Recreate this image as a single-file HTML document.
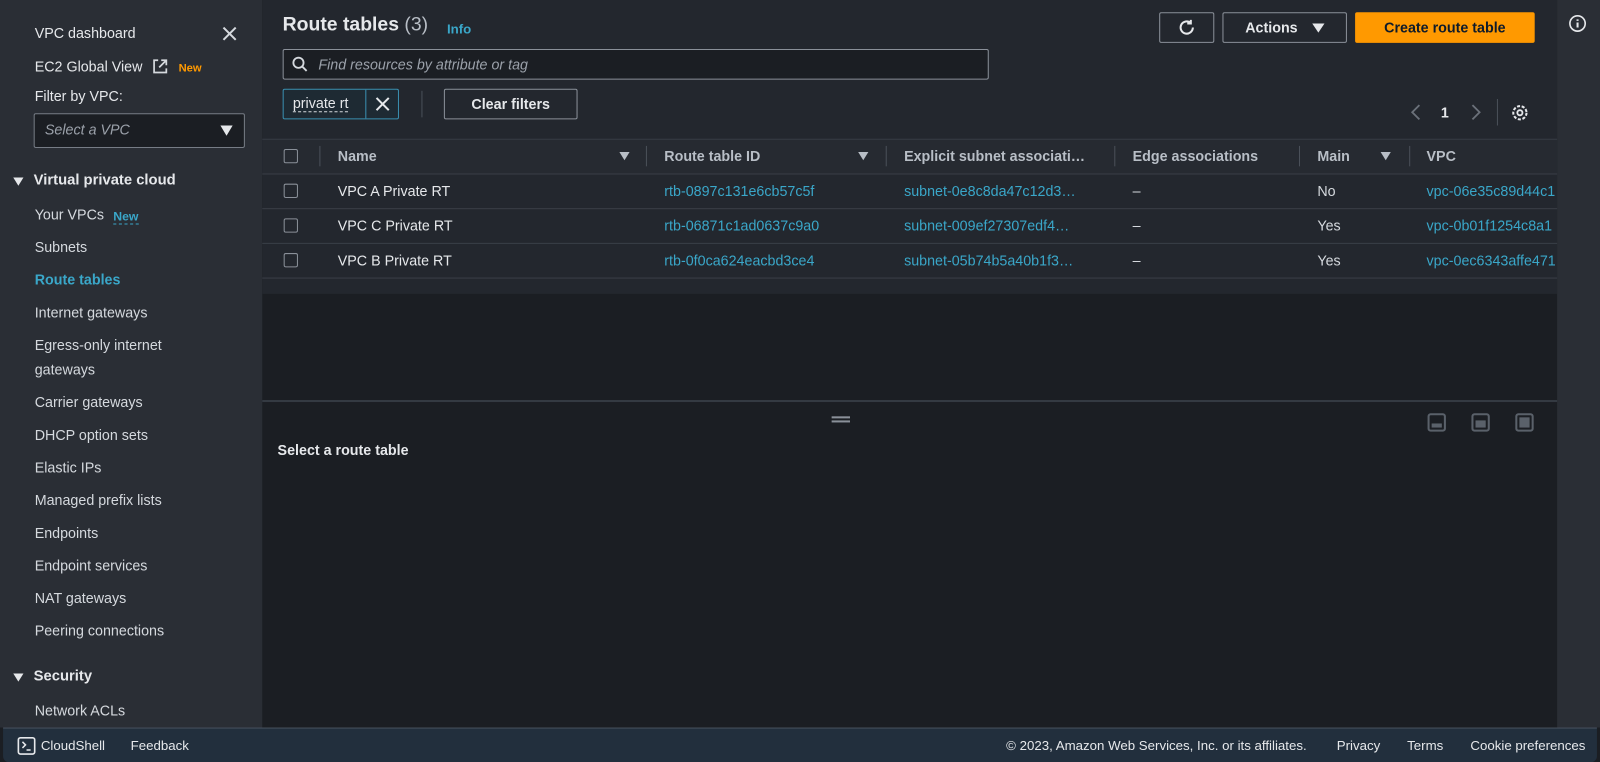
<!DOCTYPE html>
<html><head><meta charset="utf-8"><style>
*{box-sizing:border-box;margin:0;padding:0}
html,body{width:1600px;height:762px;overflow:hidden;background:#1b1e23}
#wrap{position:absolute;left:0;top:0;width:1568px;height:747px;transform:scale(1.020408);transform-origin:0 0;font-family:"Liberation Sans",sans-serif;font-size:14px;color:#d5d9de}
.abs{position:absolute;white-space:nowrap}
#side{position:absolute;left:0;top:0;width:257px;height:713px;background:#2a2e35}
#side .it{position:absolute;left:34px;font-size:14px;color:#d5d9de}
#side .h{position:absolute;left:14px;font-weight:bold;font-size:14.5px;color:#e6e8eb}
#main{position:absolute;left:257px;top:0;width:1269px;height:288px;background:#23272e}
#rail{position:absolute;left:1526px;top:0;width:42px;height:713px;background:#2a2e35}
.link{color:#3aa7c9}
.btn{position:absolute;border:1px solid #8a9099;border-radius:2px;color:#e6e8eb;font-weight:bold;font-size:14px;display:flex;align-items:center;justify-content:center}
.cb{position:absolute;left:278px;width:14px;height:14px;border:1.5px solid #8a9099;border-radius:2px}
.row{position:absolute;left:257px;width:1269px;height:1px;background:#3a3f47}
.sep{position:absolute;width:1px;height:20px;background:#4a5059}
.hd{position:absolute;font-weight:bold;color:#b8bec6;font-size:14px}
.tri{position:absolute;width:0;height:0;border-left:5px solid transparent;border-right:5px solid transparent;border-top:8px solid #b8bec6}
#fbar{position:absolute;left:3px;top:713px;width:1562px;height:34px;background:#222f3d;border-top:1px solid #4a5361;border-radius:0 0 6px 6px}
#fbar span{position:absolute;top:9px;font-size:13px;color:#e6e8eb}
</style></head><body><div id="wrap">
<div id="side">
<div class="it" style="top:24px;color:#e6e8eb">VPC dashboard</div>
<svg class="abs" style="left:218px;top:26px" width="14" height="14"><path d="M1 1L13 13M13 1L1 13" stroke="#d5d9de" stroke-width="2"/></svg>
<div class="it" style="top:57px;color:#e6e8eb">EC2 Global View</div>
<svg class="abs" style="left:149px;top:57px" width="16" height="16"><path d="M6 2H2v12h12v-4M9 2h5v5M14 2L7 9" stroke="#d5d9de" stroke-width="1.7" fill="none"/></svg>
<div class="abs" style="left:175px;top:61px;font-size:11px;font-weight:bold;color:#ff9900">New</div>
<div class="it" style="top:86px;color:#e6e8eb">Filter by VPC:</div>
<div class="abs" style="left:33px;top:111px;width:207px;height:34px;border:1px solid #767c85;background:#1b1e23;border-radius:2px"></div>
<div class="abs" style="left:44px;top:119px;font-style:italic;color:#9ba1aa">Select a VPC</div>
<div class="tri" style="left:216px;top:123px;border-top-color:#e6e8eb;border-left-width:6px;border-right-width:6px;border-top-width:10px"></div>
<div class="tri" style="left:13px;top:174px;border-top-color:#e6e8eb"></div>
<div class="h" style="left:33px;top:169px">Virtual private cloud</div>
<div class="it" style="top:202px">Your VPCs</div>
<div class="abs" style="left:111px;top:205px;font-size:12px;font-weight:bold;color:#3aa7c9;border-bottom:1px dashed #3aa7c9">New</div>
<div class="it" style="top:234px">Subnets</div>
<div class="it" style="top:266px;color:#3aa7c9;font-weight:bold">Route tables</div>
<div class="it" style="top:298px">Internet gateways</div>
<div class="it" style="top:330px">Egress-only internet</div>
<div class="it" style="top:354px">gateways</div>
<div class="it" style="top:386px">Carrier gateways</div>
<div class="it" style="top:418px">DHCP option sets</div>
<div class="it" style="top:450px">Elastic IPs</div>
<div class="it" style="top:482px">Managed prefix lists</div>
<div class="it" style="top:514px">Endpoints</div>
<div class="it" style="top:546px">Endpoint services</div>
<div class="it" style="top:578px">NAT gateways</div>
<div class="it" style="top:610px">Peering connections</div>
<div class="tri" style="left:13px;top:660px;border-top-color:#e6e8eb"></div>
<div class="h" style="left:33px;top:655px">Security</div>
<div class="it" style="top:688px">Network ACLs</div>
</div>
<div id="main"></div>
<div id="rail"></div>
<svg class="abs" style="left:1537px;top:14px" width="18" height="18"><circle cx="9" cy="9" r="7.5" stroke="#e6e8eb" stroke-width="1.6" fill="none"/><path d="M9 8v5M9 5v1.5" stroke="#e6e8eb" stroke-width="2"/></svg>

<div class="abs" style="left:277px;top:14px;font-size:19px;font-weight:bold;color:#e6e8eb">Route tables <span style="font-weight:normal;color:#b8bec6">(3)</span></div>
<div class="abs" style="left:438px;top:21px;font-size:13px;font-weight:bold;color:#3aa7c9">Info</div>
<div class="btn" style="left:1136px;top:12px;width:54px;height:30px"><svg width="18" height="18"><path d="M15 9a6 6 0 1 1-2-4.5M13 1.5v3.5h-3.5" stroke="#e6e8eb" stroke-width="2" fill="none"/></svg></div>
<div class="btn" style="left:1198px;top:12px;width:122px;height:30px">Actions<span style="display:inline-block;margin-left:14px;width:0;height:0;border-left:6px solid transparent;border-right:6px solid transparent;border-top:9px solid #e6e8eb"></span></div>
<div class="btn" style="left:1328px;top:12px;width:176px;height:30px;background:#ff9900;border-color:#ff9900;color:#0f1b2a">Create route table</div>
<div class="abs" style="left:277px;top:48px;width:692px;height:30px;border:1px solid #8a9099;background:#1b1e23;border-radius:2px"></div>
<svg class="abs" style="left:286px;top:55px" width="16" height="16"><circle cx="6.5" cy="6.5" r="5" stroke="#d5d9de" stroke-width="1.8" fill="none"/><path d="M10 10l4.5 4.5" stroke="#d5d9de" stroke-width="1.8"/></svg>
<div class="abs" style="left:312px;top:55px;font-style:italic;color:#9ba1aa">Find resources by attribute or tag</div>
<div class="abs" style="left:277px;top:87px;width:114px;height:30px;border:1px solid #3a8fb0;background:#1e2a33;border-radius:2px"></div>
<div class="abs" style="left:358px;top:88px;width:1px;height:28px;background:#3a8fb0"></div>
<div class="abs" style="left:287px;top:94px;color:#e6e8eb;border-bottom:1px dashed #d5d9de;line-height:15px">private rt</div>
<svg class="abs" style="left:368px;top:95px" width="14" height="14"><path d="M1 1L13 13M13 1L1 13" stroke="#e6e8eb" stroke-width="2"/></svg>
<div class="abs" style="left:413px;top:89px;width:1px;height:26px;background:#4a5059"></div>
<div class="btn" style="left:435px;top:87px;width:131px;height:30px">Clear filters</div>
<svg class="abs" style="left:1382px;top:102px" width="12" height="16"><path d="M9 1L2 8l7 7" stroke="#6b717a" stroke-width="1.8" fill="none"/></svg>
<div class="abs" style="left:1412px;top:102px;font-weight:bold;color:#e6e8eb">1</div>
<svg class="abs" style="left:1440px;top:102px" width="12" height="16"><path d="M3 1l7 7-7 7" stroke="#6b717a" stroke-width="1.8" fill="none"/></svg>
<div class="abs" style="left:1467px;top:97px;width:1px;height:26px;background:#4a5059"></div>
<svg class="abs" style="left:1480px;top:101px" width="19" height="19"><circle cx="9.5" cy="9.5" r="6.5" stroke="#e6e8eb" stroke-width="2" fill="none" stroke-dasharray="3 1.6"/><circle cx="9.5" cy="9.5" r="2.5" stroke="#e6e8eb" stroke-width="1.8" fill="none"/></svg>

<div class="row" style="top:136px"></div>
<div class="row" style="top:170px"></div>
<div class="row" style="top:204px"></div>
<div class="row" style="top:238px"></div>
<div class="row" style="top:272px"></div>
<div class="abs" style="left:257px;top:137px;width:1269px;height:33px;background:#262a31"></div>
<div class="cb" style="top:146px"></div>
<div class="cb" style="top:180px"></div>
<div class="cb" style="top:214px"></div>
<div class="cb" style="top:248px"></div>
<div class="sep" style="left:313px;top:143px"></div>
<div class="hd" style="left:331px;top:145px">Name</div><div class="tri" style="left:607px;top:149px"></div>
<div class="sep" style="left:633px;top:143px"></div>
<div class="hd" style="left:651px;top:145px">Route table ID</div><div class="tri" style="left:841px;top:149px"></div>
<div class="sep" style="left:868px;top:143px"></div>
<div class="hd" style="left:886px;top:145px">Explicit subnet associati…</div>
<div class="sep" style="left:1092px;top:143px"></div>
<div class="hd" style="left:1110px;top:145px">Edge associations</div>
<div class="sep" style="left:1273px;top:143px"></div>
<div class="hd" style="left:1291px;top:145px">Main</div><div class="tri" style="left:1353px;top:149px"></div>
<div class="sep" style="left:1381px;top:143px"></div>
<div class="hd" style="left:1398px;top:145px">VPC</div>

<div class="abs" style="left:331px;top:179px;color:#e6e8eb">VPC A Private RT</div>
<div class="abs link" style="left:651px;top:179px">rtb-0897c131e6cb57c5f</div>
<div class="abs link" style="left:886px;top:179px">subnet-0e8c8da47c12d3…</div>
<div class="abs" style="left:1110px;top:179px">–</div>
<div class="abs" style="left:1291px;top:179px">No</div>
<div class="abs link" style="left:1398px;top:179px;width:128px;overflow:hidden">vpc-06e35c89d44c1</div>
<div class="abs" style="left:331px;top:213px;color:#e6e8eb">VPC C Private RT</div>
<div class="abs link" style="left:651px;top:213px">rtb-06871c1ad0637c9a0</div>
<div class="abs link" style="left:886px;top:213px">subnet-009ef27307edf4…</div>
<div class="abs" style="left:1110px;top:213px">–</div>
<div class="abs" style="left:1291px;top:213px">Yes</div>
<div class="abs link" style="left:1398px;top:213px;width:128px;overflow:hidden">vpc-0b01f1254c8a1</div>
<div class="abs" style="left:331px;top:247px;color:#e6e8eb">VPC B Private RT</div>
<div class="abs link" style="left:651px;top:247px">rtb-0f0ca624eacbd3ce4</div>
<div class="abs link" style="left:886px;top:247px">subnet-05b74b5a40b1f3…</div>
<div class="abs" style="left:1110px;top:247px">–</div>
<div class="abs" style="left:1291px;top:247px">Yes</div>
<div class="abs link" style="left:1398px;top:247px;width:128px;overflow:hidden">vpc-0ec6343affe471</div>

<div class="abs" style="left:257px;top:392px;width:1269px;height:2px;background:#343a42"></div>
<div class="abs" style="left:815px;top:408px;width:18px;height:2px;background:#8a9099"></div>
<div class="abs" style="left:815px;top:412px;width:18px;height:2px;background:#8a9099"></div>
<div class="abs" style="left:1399px;top:405px;width:18px;height:18px;border:2px solid #5a616a;border-radius:3px"><div style="position:absolute;left:2px;right:2px;bottom:2px;height:4px;background:#5a616a"></div></div>
<div class="abs" style="left:1442px;top:405px;width:18px;height:18px;border:2px solid #5a616a;border-radius:3px"><div style="position:absolute;left:2px;right:2px;bottom:2px;height:7px;background:#5a616a"></div></div>
<div class="abs" style="left:1485px;top:405px;width:18px;height:18px;border:2px solid #5a616a;border-radius:3px"><div style="position:absolute;left:2px;right:2px;bottom:2px;top:2px;background:#5a616a"></div></div>
<div class="abs" style="left:272px;top:433px;font-weight:bold;color:#e6e8eb">Select a route table</div>

<div id="fbar">
<svg style="position:absolute;left:14px;top:8px" width="18" height="18"><rect x="1" y="1" width="16" height="16" rx="2" stroke="#e6e8eb" stroke-width="1.6" fill="none"/><path d="M5 5l3 3-3 3M9 13h4" stroke="#e6e8eb" stroke-width="1.5" fill="none"/></svg>
<span style="left:37px">CloudShell</span>
<span style="left:125px">Feedback</span>
<span style="left:983px">© 2023, Amazon Web Services, Inc. or its affiliates.</span>
<span style="left:1307px">Privacy</span>
<span style="left:1376px">Terms</span>
<span style="left:1438px">Cookie preferences</span>
</div>
</div></body></html>
